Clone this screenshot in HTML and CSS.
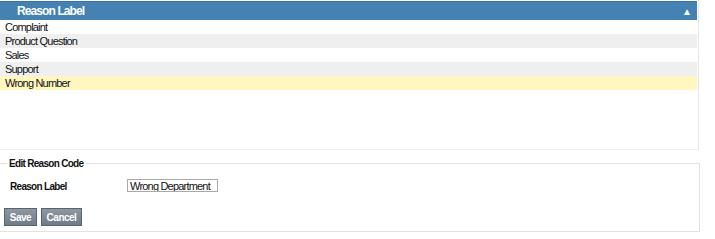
FILE: index.html
```html
<!DOCTYPE html>
<html lang="en">
<head>
<meta charset="UTF-8">
<title>Reason Codes</title>
<link rel="stylesheet" href="styles.css">
</head>
<body>

<div class="grid">
    <div class="grid-head">
        <span>Reason Label</span>
        <span class="sort">&#9650;</span>
    </div>
    <div class="row">Complaint</div>
    <div class="row alt">Product Question</div>
    <div class="row">Sales</div>
    <div class="row alt">Support</div>
    <div class="row sel">Wrong Number</div>
</div>

<fieldset class="edit">
    <legend>Edit Reason Code</legend>
    <div class="field">
        <label for="label">Reason Label</label>
        <input type="text" id="label" value="Wrong Department">
    </div>
    <div class="botoes">
        <button class="btn-save">Save</button>
        <button class="btn-cancel">Cancel</button>
    </div>
</fieldset>

</body>
</html>
```

FILE: styles.css
```css
body {
    margin: 0;
    font-family: "Liberation Sans", Arial, sans-serif;
    font-size: 11px;
    letter-spacing: -0.8px;
    color: #111;
    background: #fff;
}
.grid {
    width: 698px;
    height: 148px;
    padding-top: 1px;
    border-right: 1px solid #e6e6e6;
    border-bottom: 1px solid #ececec;
}
.grid-head {
    height: 19px;
    background: #4382b3;
    border-top: 1px solid #3a74a2;
    box-sizing: border-box;
    width: 697px;
    color: #fff;
    font-weight: bold;
    font-size: 12px;
    letter-spacing: -0.9px;
    display: flex;
    align-items: center;
    justify-content: space-between;
    padding: 0 6px 0 17px;
}
.sort {
    font-size: 10px;
}
.row {
    height: 14px;
    line-height: 14px;
    padding-left: 5px;
    width: 692px;
}
.alt {
    background: #efefef;
}
.sel {
    background: #fff6c0;
}
.edit {
    margin: 8px 0 0 0;
    width: 700px;
    height: 74px;
    box-sizing: border-box;
    border: 1px solid #e2e2e2;
    border-left: none;
    padding: 0;
}
.edit legend {
    font-weight: bold;
    font-size: 10px;
    letter-spacing: -0.7px;
    margin-left: 7px;
    padding: 0 2px;
}
.field {
    display: flex;
    align-items: center;
    margin-top: 10px;
    padding-left: 10px;
}
.field label {
    font-weight: bold;
    font-size: 10px;
    letter-spacing: -0.7px;
    width: 117px;
    padding-top: 2px;
}
.field input {
    width: 91px;
    height: 13px;
    box-sizing: border-box;
    border: 1px solid #a9a9a9;
    padding: 0 2px;
    font: 11px "Liberation Sans", Arial, sans-serif;
    letter-spacing: -0.8px;
    color: #111;
}
.botoes {
    display: flex;
    gap: 4px;
    margin-top: 16px;
    padding-left: 4px;
}
.botoes button {
    height: 18px;
    padding: 0;
    border: 1px solid #5a646d;
    background: linear-gradient(#8d98a2, #6f7b86);
    color: #fff;
    font: bold 10px "Liberation Sans", Arial, sans-serif;
    letter-spacing: -0.5px;
}
.btn-save {
    width: 33px;
}
.btn-cancel {
    width: 41px;
}
```
